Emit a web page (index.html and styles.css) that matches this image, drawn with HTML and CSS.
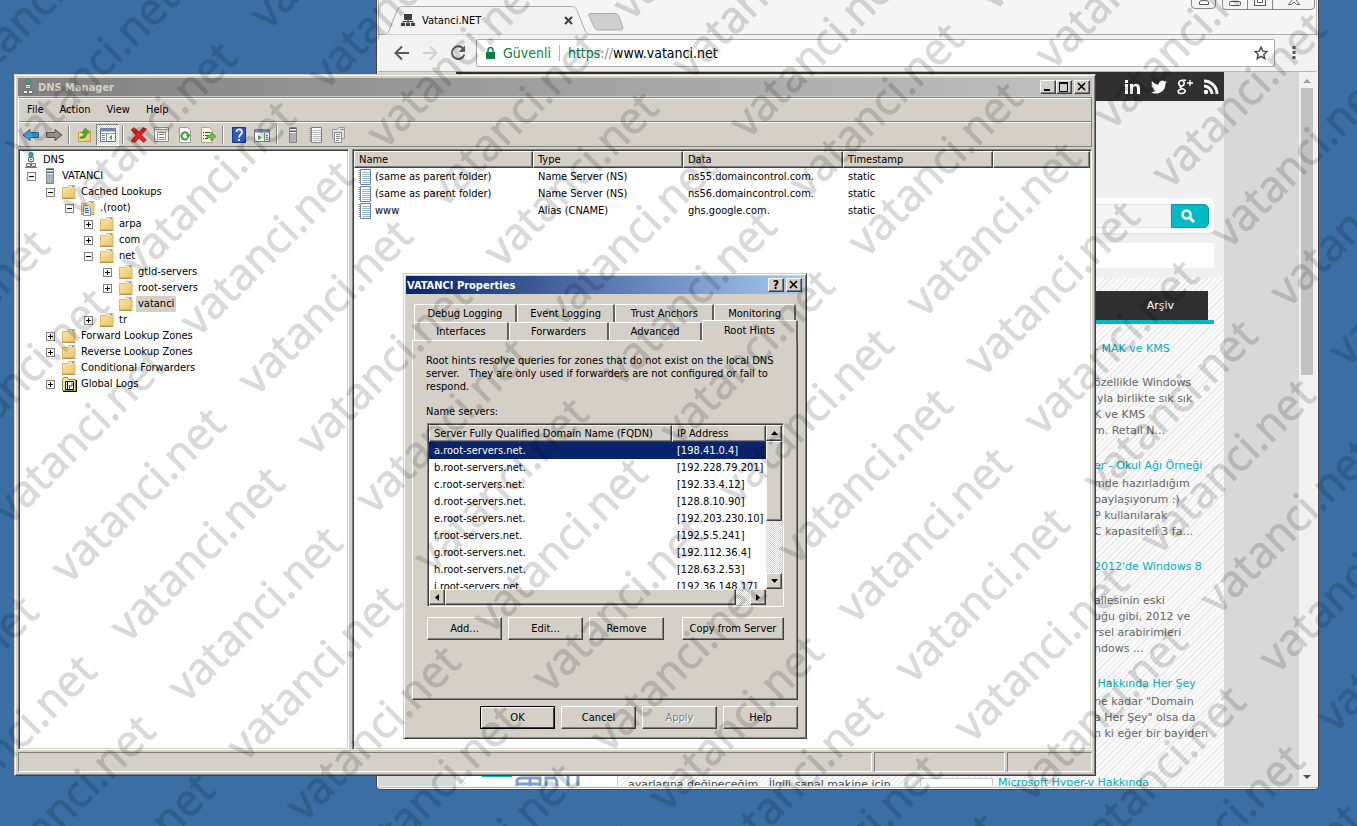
FILE: index.html
```html
<!DOCTYPE html>
<html lang="tr">
<head>
    <meta charset="UTF-8">
    <meta name="viewport" content="width=device-width, initial-scale=1.0">
    <title>DNS Manager</title>
    <link rel="stylesheet" href="styles.css">
</head>
<body>
    <svg class="sprite" aria-hidden="true">
        <linearGradient id="folder-fill" x1="0" y1="0" x2="1" y2="1">
            <stop offset="0" stop-color="#fbe9ac"/><stop offset="1" stop-color="#e9c363"/>
        </linearGradient>
        <symbol id="folder" viewBox="0 0 16 16">
            <path d="M1.500 3.500h5l1.500-2h6v12h-12.500z" fill="url(#folder-fill)" stroke="#dcb65c"/>
            <path d="M8.500 2.500h5" stroke="#fff7da"/><path d="M11 2.500h2" stroke="#5a93c4"/>
            <path d="M1 14.500h13.500" fill="none" stroke="#b9964c"/>
        </symbol>
        <symbol id="root" viewBox="0 0 16 16">
            <use href="#folder"/>
            <path d="M3.500 5.500h5l2 2v8h-7z" fill="#fff" stroke="#8497b5"/>
            <path d="M5 8.500h3M5 10.500h4M5 12.500h4" stroke="#3f78b8"/>
        </symbol>
        <symbol id="dns" viewBox="0 0 16 16">
            <circle cx="8" cy="2.600" r="2.600" fill="#2b7fc4"/><path d="M6 2l2-1.500 1.500 1.500-1 2-2 .5z" fill="#39b54a"/>
            <path d="M5.500 5.500h5v4h-5zM3.500 11.500h4v3h-4zM8.500 11.500h4v3h-4z" fill="#e6e9ee" stroke="#6a727c"/>
            <path d="M7 7.500h2M8 10v1M2 15.500h12" stroke="#777"/>
        </symbol>
        <symbol id="server" viewBox="0 0 16 16">
            <path d="M4.500.5h7v15h-7z" fill="#aab4bb" stroke="#7b868f"/>
            <path d="M5 2.500h6M5 5.500h6" stroke="#edf3f7"/><path d="M5 1.500h6M5 4.500h6" stroke="#56616a"/>
            <path d="M9 13h2v2H9z" fill="#7bd321"/>
        </symbol>
        <symbol id="record" viewBox="0 0 16 16">
            <path d="M3.500.5h10v15h-10z" fill="#fff" stroke="#6681a3"/>
            <path d="M5 3.500h8M5 5.500h8M5 7.500h8M5 9.500h8M5 11.500h8M5 13.500h8" stroke="#9bbcd8"/>
            <path d="M1.500 1.500H4M1.500 3.500H4M1.500 5.500H4M1.500 7.500H4M1.500 9.500H4M1.500 11.500H4M1.500 13.500H4" stroke="#888"/>
        </symbol>
        <symbol id="logs" viewBox="0 0 16 16">
            <path d="M1.500 14.500v-11l1-2h4l1 2h7v11z" fill="#f4ee6a" stroke="#8d8940"/>
            <path d="M2 15.500h13.500V4" fill="none" stroke="#000"/>
            <path d="M4.500 5.500h8v8h-8z" fill="#fff" stroke="#000"/>
            <path d="M6.500 6v7" stroke="#000"/>
            <path d="M8.500 9v4" stroke="#e02020"/><path d="M11 7v3H9" fill="none" stroke="#2233cc"/>
        </symbol>
        <symbol id="arrow" viewBox="0 0 16 16">
            <path d="M0 8l7-5.500v3h8.500v5H7v3z" stroke-linejoin="round"/>
        </symbol>
    </svg>

    <div class="desktop">

        <!-- browser -->
        <section class="browser">
            <div class="tab-strip">
                <svg class="tab-shape" width="215" height="35" viewBox="0 0 215 35">
                    <path d="M0 34.500c7 0 8 0 10-4l8-20c2-4 3-4 7-4h166c4 0 5 0 7 4l8 20c2 4 3 4 9 4" fill="#f2f2f2" stroke="#a9a9a9"/>
                </svg>
                <div class="tab">
                    <svg width="16" height="14" viewBox="0 0 16 14"><path d="M4 1h8v6H4zM1 10h4v3H1zM6 10h4v3H6zM11 10h4v3h-4z" fill="#3d3d3d"/><path d="M8 7v3M3 10V8.500h10V10" fill="none" stroke="#3d3d3d"/></svg>
                    <span class="tab-title">Vatanci.NET</span>
                    <button class="tab-close" aria-label="Close tab"><svg width="9" height="9" viewBox="0 0 9 9"><path d="M1 1l7 7M8 1L1 8" stroke="#3c3c3c" stroke-width="2"/></svg></button>
                </div>
                <svg class="new-tab" width="36" height="18" viewBox="0 0 36 18"><path d="M3 .5h24c2 0 3 1 4 3l4 11c0 2-1 2.500-2 2.500H10c-2 0-3-1-4-3L1 3C0 1 1 .5 3 .5z" fill="#cfcfcf" stroke="#adadad"/></svg>
                <div class="browser-caption">
                    <button class="cap user" aria-label="Profile"><svg width="12" height="8" viewBox="0 0 12 8"><path d="M3 0c0 3 6 3 6 0M1.500 7.500V5c0-2 9-2 9 0v2.500z" fill="#fff" stroke="#555"/></svg></button>
                    <div class="cap-group">
                        <button class="cap" aria-label="Minimize"><svg width="12" height="5" viewBox="0 0 12 5"><rect x=".5" y=".5" width="11" height="4" rx="1" fill="#fff" stroke="#555"/></svg></button>
                        <button class="cap" aria-label="Maximize"><svg width="12" height="8" viewBox="0 0 12 8"><path d="M.5-2v9.500h11V-2M3.500-2v6.500h5V-2" fill="#fff" stroke="#555"/></svg></button>
                        <button class="cap wide" aria-label="Close"><svg width="12" height="8" viewBox="0 0 12 8"><path d="M3-1l1 3-3.500 4.500h3L6 4l2.500 2.500h3L8 2l1-3" fill="#fff" stroke="#666"/></svg></button>
                    </div>
                </div>
            </div>
            <div class="address-row">
                <button class="nav" aria-label="Back"><svg width="16" height="16" viewBox="0 0 16 16"><path d="M15 8H2M8 1.500L1.500 8 8 14.500" fill="none" stroke="#5a5a5a" stroke-width="2"/></svg></button>
                <button class="nav" aria-label="Forward"><svg width="16" height="16" viewBox="0 0 16 16"><path d="M1 8h13M8 1.500L14.500 8 8 14.500" fill="none" stroke="#d0d0d0" stroke-width="2"/></svg></button>
                <button class="nav" aria-label="Reload"><svg width="16" height="16" viewBox="0 0 16 16"><path d="M13 3.500A6.300 6.300 0 1 0 14.300 9.500" fill="none" stroke="#5a5a5a" stroke-width="2"/><path d="M15 .5V7H8.500z" fill="#5a5a5a"/></svg></button>
                <div class="omnibox">
                    <svg width="9" height="12" viewBox="0 0 9 12"><path d="M0 5h9v7H0z" fill="#0b8043"/><path d="M2 5V3a2.500 2.500 0 0 1 5 0v2" fill="none" stroke="#0b8043" stroke-width="1.500"/></svg>
                    <span class="secure">Güvenli</span>
                    <a class="url" href="#"><span class="scheme">https</span><span class="slashes">://</span>www.vatanci.net</a>
                    <svg class="star" width="14" height="14" viewBox="0 0 14 14"><path d="M7 1l1.800 4.100 4.200.4-3.200 2.900 1 4.300L7 10.400l-3.800 2.300 1-4.300L1 5.500l4.200-.4z" fill="none" stroke="#444" stroke-width="1.400"/></svg>
                </div>
                <button class="kebab" aria-label="Menu"><svg width="4" height="14" viewBox="0 0 4 14"><path d="M.5 0h3v3h-3zM.5 5h3v3h-3zM.5 10h3v3h-3z" fill="#5a5a5a"/></svg></button>
            </div>
            <div class="viewport">
                <div class="site">
                    <header class="social">
                        <a href="#" aria-label="LinkedIn"><svg width="16" height="16" viewBox="0 0 16 16"><path d="M0 5h3v10H0zM0 1h3v3H0zM5 5h3v1.500C9.500 4 15 4 15 8.500V15h-3V9c0-2.500-4-2.500-4 0v6H5z" fill="#fff"/></svg></a>
                        <a href="#" aria-label="Twitter"><svg width="16" height="16" viewBox="0 0 24 24"><path d="M24 4.600a10 10 0 0 1-2.800.8 5 5 0 0 0 2.100-2.700 10 10 0 0 1-3.100 1.200 4.900 4.900 0 0 0-8.400 4.500A14 14 0 0 1 1.700 3.200a4.900 4.900 0 0 0 1.500 6.500 4.900 4.900 0 0 1-2.200-.6 4.900 4.900 0 0 0 4 4.900 5 5 0 0 1-2.300.1 4.900 4.900 0 0 0 4.600 3.400A9.900 9.900 0 0 1 0 19.500 14 14 0 0 0 21.500 7z" fill="#fff"/></svg></a>
                        <a href="#" aria-label="Google Plus"><svg width="16" height="16" viewBox="0 0 16 16"><ellipse cx="4.500" cy="4.300" rx="2.700" ry="2.800" fill="none" stroke="#fff" stroke-width="1.700"/><path d="M4.500 1.300H9M4 7.500c-2 1.200 0 1.800 1.500 2.200 4.500 1.300 3 4.800-1 4.800-4.500 0-4.500-3.500 0-4.200" fill="none" stroke="#fff" stroke-width="1.600"/><path d="M10 4h6M13 1v6" stroke="#fff" stroke-width="1.300"/></svg></a>
                        <a href="#" aria-label="RSS"><svg width="16" height="16" viewBox="0 0 16 16"><path d="M1 7a8 8 0 0 1 8 8M1 2a13 13 0 0 1 13 13" fill="none" stroke="#fff" stroke-width="3"/><circle cx="3" cy="13" r="2.200" fill="#fff"/></svg></a>
                    </header>
                    <form class="search">
                        <input type="text" aria-label="Ara">
                        <button type="button" aria-label="Ara"><svg width="14" height="14" viewBox="0 0 14 14"><circle cx="5.500" cy="5.500" r="4" fill="none" stroke="#fff" stroke-width="2.500"/><path d="M8.500 8.500L13 13" stroke="#fff" stroke-width="3"/></svg></button>
                    </form>
                    <div class="notice"></div>
                    <div class="columns">
                        <article class="post">
                            <div class="thumb">
                                <svg width="70" height="11" viewBox="0 0 70 11"><path d="M3 11V5c0-3 3-3 5-3h18v9M16 2v9M3 8h23M32 11V2h7c4 0 4 3 4 9M54 11V0M64 11V0" fill="none" stroke="#7e9fd0" stroke-width="3"/></svg>
                            </div>
                            <p>ayarlarına değineceğim.. İlgili sanal makine için</p>
                            <div class="more"></div>
                        </article>
                        <aside class="sidebar">
                            <h3>Arşiv</h3>
                            <h4 class="long"><a href="#">- MAK ve KMS</a></h4>
                            <p>özellikle Windows<br>ıyla birlikte sık sık<br>K ve KMS<br>m. Retail N...</p>
                            <h4><a href="#">er - Okul Ağı Örneği</a></h4>
                            <p>mde hazırladığım<br>paylaşıyorum :)<br>P kullanılarak<br>C kapasiteli 3 fa...</p>
                            <h4 class="long"><a href="#">2012'de Windows 8</a></h4>
                            <p>ailesinin eski<br>uğu gibi, 2012 ve<br>rsel arabirimleri<br>ndows ...</p>
                            <h4><a href="#">&nbsp;Hakkında Her Şey</a></h4>
                            <p class="last">ne kadar "Domain<br>a Her Şey" olsa da<br>n ki eğer bir bayiden</p>
                            <h4 class="next"><a href="#">Microsoft Hyper-v Hakkında</a></h4>
                        </aside>
                    </div>
                </div>
                <div class="page-scroll">
                    <svg width="10" height="5" viewBox="0 0 10 5"><path d="M1 5l4-4 4 4z" fill="#a0a0a0"/></svg>
                    <div class="page-thumb"></div>
                    <svg width="10" height="5" viewBox="0 0 10 5"><path d="M1 0l4 4 4-4z" fill="#505050"/></svg>
                </div>
            </div>
        </section>

        <!-- dns manager -->
        <section class="window dns">
            <div class="title-bar inactive">
                <svg class="icon"><use href="#dns"/></svg>
                <span class="title">DNS Manager</span>
                <button class="caption" aria-label="Minimize"><svg width="12" height="10" viewBox="0 0 12 10"><path d="M2 8h6" stroke="#000" stroke-width="2"/></svg></button>
                <button class="caption" aria-label="Maximize"><svg width="12" height="10" viewBox="0 0 12 10"><path d="M1.500 1v8.500h8V1" fill="none" stroke="#000"/><path d="M1 1h9" stroke="#000" stroke-width="2"/></svg></button>
                <button class="caption apart" aria-label="Close"><svg width="12" height="10" viewBox="0 0 12 10"><path d="M2 1l7 7M9 1L2 8" stroke="#000" stroke-width="1.600"/></svg></button>
            </div>
            <div class="rebar">
                <nav class="menu">
                    <button>File</button><button>Action</button><button>View</button><button>Help</button>
                </nav>
                <div class="toolbar">
                    <button aria-label="Back"><svg class="icon"><use href="#arrow" fill="#3aa0dd" stroke="#1c5f9c"/></svg></button>
                    <button aria-label="Forward"><svg class="icon flip"><use href="#arrow" fill="#8c8c8c" stroke="#555"/></svg></button>
                    <i class="sep"></i>
                    <button aria-label="Up"><svg class="icon" viewBox="0 0 16 16"><path d="M1.500 5.500h6l1-2h5v11h-12z" fill="url(#folder-fill)" stroke="#c79c3d"/><path d="M3 10c3 0 4-1 4-4H4.500L8.500 1l4 5H10c0 4-3 6-7 5z" fill="#46b02e" stroke="#28761c" stroke-width=".6"/></svg></button>
                    <button class="pressed" aria-label="Show tree"><svg class="icon" viewBox="0 0 16 16"><path d="M.5 1.500h15v13H.5z" fill="#fff" stroke="#6a7891"/><path d="M1 3h14" stroke="#7588ac" stroke-width="3"/><path d="M1 6.500h14M6.500 7v7" stroke="#8795ae"/><path d="M2 8.500h3M2 10.500h3M2 12.500h3" stroke="#6a7891"/><path d="M12 8v5l-3-2.500z" fill="#36a52c"/></svg></button>
                    <i class="sep"></i>
                    <button aria-label="Delete"><svg class="icon" viewBox="0 0 16 16"><path d="M0 3l3-2.500L8 5l4.500-4.500L15.500 2 10.500 8l5 5-3 2.500L8 11l-4 4.500L0 14l5-6z" fill="#dc2222" stroke="#9e1111" stroke-width=".6"/></svg></button>
                    <button aria-label="Properties"><svg class="icon" viewBox="0 0 16 16"><path d="M.5.5h14v14H.5z" fill="#f3f1ec" stroke="#8d8a82"/><path d="M1 2.500h13" stroke="#aaa"/><path d="M3.500 5.500h8v7h-8z" fill="#fff" stroke="#999"/><path d="M5 7.500h5M5 10.500h5" stroke="#777"/></svg></button>
                    <button aria-label="Refresh"><svg class="icon" viewBox="0 0 16 16"><path d="M2.500.5h8l3 3v12h-11z" fill="#fff" stroke="#9a9a9a"/><path d="M10.500 11.500A3.600 3.600 0 1 1 11.500 8" fill="none" stroke="#35a12c" stroke-width="2"/><path d="M13.500 7.500L11 12 9 8z" fill="#35a12c"/></svg></button>
                    <button aria-label="Export list"><svg class="icon" viewBox="0 0 16 16"><path d="M1.500.5h8l3 3v12h-11z" fill="#fcf5dd" stroke="#b0a484"/><path d="M3 5.500h1M5 5.500h5M3 8.500h1M5 8.500h3M3 11.500h1M5 11.500h3" stroke="#444"/><path d="M7 8h4V5l5 4.500-5 4.500v-3H7z" fill="#65c43e" stroke="#2c8a23" stroke-width=".6"/></svg></button>
                    <i class="sep"></i>
                    <button aria-label="Help"><svg class="icon" viewBox="0 0 16 16"><path d="M1.500.5h13v15h-13z" fill="#2f57c3" stroke="#1b3484"/><path d="M5.500 5c0-4 5.500-3 5.500 0S8 7.500 8 10.500" fill="none" stroke="#fff" stroke-width="1.800"/><path d="M7 12h2v2H7z" fill="#fff"/></svg></button>
                    <button aria-label="Show pane"><svg class="icon" viewBox="0 0 16 16"><path d="M.5 2.500h15v12H.5z" fill="#fff" stroke="#6a7891"/><path d="M1 4h14" stroke="#7588ac" stroke-width="3"/><path d="M10.500 6v8" stroke="#8795ae"/><path d="M12 8.500h2M12 10.500h2M12 12.500h2" stroke="#6a7891"/><path d="M4 8v5l4-2.500z" fill="#36a52c"/></svg></button>
                    <i class="sep"></i>
                    <button aria-label="New server"><svg class="icon gray"><use href="#server"/></svg></button>
                    <button aria-label="New record"><svg class="icon gray"><use href="#record"/></svg></button>
                    <button aria-label="New zone"><svg class="icon gray" viewBox="0 0 16 16"><path d="M1.500 2.500h5l1-2h6v11h-12z" fill="#e0e0e0" stroke="#999"/><path d="M3.500 5.500h7v10h-7z" fill="#f8f8f8" stroke="#888"/><path d="M5 7.500h4M5 9.500h4M5 11.500h4M5 13.500h3M9 2.500h4" stroke="#888"/></svg></button>
                </div>
            </div>
            <div class="panes">
                <div class="tree">
                    <div class="node top"><svg class="icon"><use href="#dns"/></svg><span>DNS</span></div>
                    <ul>
                        <li>
                            <div class="node"><button class="expander open" aria-label="Collapse"></button><svg class="icon"><use href="#server"/></svg><span>VATANCI</span></div>
                            <ul>
                                <li>
                                    <div class="node"><button class="expander open" aria-label="Collapse"></button><svg class="icon"><use href="#folder"/></svg><span>Cached Lookups</span></div>
                                    <ul>
                                        <li>
                                            <div class="node"><button class="expander open" aria-label="Collapse"></button><svg class="icon"><use href="#root"/></svg><span>.(root)</span></div>
                                            <ul>
                                                <li><div class="node"><button class="expander" aria-label="Expand"></button><svg class="icon"><use href="#folder"/></svg><span>arpa</span></div></li>
                                                <li><div class="node"><button class="expander" aria-label="Expand"></button><svg class="icon"><use href="#folder"/></svg><span>com</span></div></li>
                                                <li>
                                                    <div class="node"><button class="expander open" aria-label="Collapse"></button><svg class="icon"><use href="#folder"/></svg><span>net</span></div>
                                                    <ul>
                                                        <li><div class="node"><button class="expander" aria-label="Expand"></button><svg class="icon"><use href="#folder"/></svg><span>gtld-servers</span></div></li>
                                                        <li><div class="node"><button class="expander" aria-label="Expand"></button><svg class="icon"><use href="#folder"/></svg><span>root-servers</span></div></li>
                                                        <li><div class="node leaf"><svg class="icon"><use href="#folder"/></svg><span class="selected">vatanci</span></div></li>
                                                    </ul>
                                                </li>
                                                <li><div class="node"><button class="expander" aria-label="Expand"></button><svg class="icon"><use href="#folder"/></svg><span>tr</span></div></li>
                                            </ul>
                                        </li>
                                    </ul>
                                </li>
                                <li><div class="node"><button class="expander" aria-label="Expand"></button><svg class="icon"><use href="#folder"/></svg><span>Forward Lookup Zones</span></div></li>
                                <li><div class="node"><button class="expander" aria-label="Expand"></button><svg class="icon"><use href="#folder"/></svg><span>Reverse Lookup Zones</span></div></li>
                                <li><div class="node leaf"><svg class="icon"><use href="#folder"/></svg><span>Conditional Forwarders</span></div></li>
                                <li><div class="node"><button class="expander" aria-label="Expand"></button><svg class="icon"><use href="#logs"/></svg><span>Global Logs</span></div></li>
                            </ul>
                        </li>
                    </ul>
                </div>
                <div class="records">
                    <table>
                        <colgroup><col class="c-name"><col class="c-mid"><col class="c-data"><col class="c-mid"><col></colgroup>
                        <thead>
                            <tr><th>Name</th><th>Type</th><th>Data</th><th>Timestamp</th><th></th></tr>
                        </thead>
                        <tbody>
                            <tr><td><svg class="icon"><use href="#record"/></svg>(same as parent folder)</td><td>Name Server (NS)</td><td>ns55.domaincontrol.com.</td><td>static</td><td></td></tr>
                            <tr><td><svg class="icon"><use href="#record"/></svg>(same as parent folder)</td><td>Name Server (NS)</td><td>ns56.domaincontrol.com.</td><td>static</td><td></td></tr>
                            <tr><td><svg class="icon"><use href="#record"/></svg>www</td><td>Alias (CNAME)</td><td>ghs.google.com.</td><td>static</td><td></td></tr>
                        </tbody>
                    </table>
                </div>
            </div>
            <div class="status"><span></span><span></span><span></span></div>
        </section>

        <!-- properties dialog -->
        <section class="window dialog">
            <div class="title-bar">
                <span class="title">VATANCI Properties</span>
                <button class="caption help" aria-label="Help">?</button>
                <button class="caption apart" aria-label="Close"><svg width="12" height="10" viewBox="0 0 12 10"><path d="M2 1l7 7M9 1L2 8" stroke="#000" stroke-width="1.600"/></svg></button>
            </div>
            <div class="tabs back">
                <button>Debug Logging</button><button>Event Logging</button><button>Trust Anchors</button><button>Monitoring</button>
            </div>
            <div class="tabs front">
                <button>Interfaces</button><button>Forwarders</button><button>Advanced</button><button class="active">Root Hints</button>
            </div>
            <div class="sheet">
                <p>Root hints resolve queries for zones that do not exist on the local DNS<br>server. &nbsp; They are only used if forwarders are not configured or fail to<br>respond.</p>
                <p class="list-label">Name servers:</p>
                <div class="list-box">
                    <div class="list-top">
                        <div class="list-view">
                            <table>
                                <colgroup><col class="c-fqdn"><col></colgroup>
                                <thead>
                                    <tr><th>Server Fully Qualified Domain Name (FQDN)</th><th>IP Address</th></tr>
                                </thead>
                                <tbody>
                                    <tr class="current"><td>a.root-servers.net.</td><td>[198.41.0.4]</td></tr>
                                    <tr><td>b.root-servers.net.</td><td>[192.228.79.201]</td></tr>
                                    <tr><td>c.root-servers.net.</td><td>[192.33.4.12]</td></tr>
                                    <tr><td>d.root-servers.net.</td><td>[128.8.10.90]</td></tr>
                                    <tr><td>e.root-servers.net.</td><td>[192.203.230.10]</td></tr>
                                    <tr><td>f.root-servers.net.</td><td>[192.5.5.241]</td></tr>
                                    <tr><td>g.root-servers.net.</td><td>[192.112.36.4]</td></tr>
                                    <tr><td>h.root-servers.net.</td><td>[128.63.2.53]</td></tr>
                                    <tr><td>i.root-servers.net.</td><td>[192.36.148.17]</td></tr>
                                </tbody>
                            </table>
                        </div>
                        <div class="scroll vertical">
                            <button aria-label="Scroll up"><svg width="7" height="4" viewBox="0 0 7 4"><path d="M0 4l3.500-4L7 4z"/></svg></button>
                            <div class="thumb-v"></div>
                            <button class="end" aria-label="Scroll down"><svg width="7" height="4" viewBox="0 0 7 4"><path d="M0 0l3.500 4L7 0z"/></svg></button>
                        </div>
                    </div>
                    <div class="scroll horizontal">
                        <button aria-label="Scroll left"><svg width="4" height="7" viewBox="0 0 4 7"><path d="M4 0L0 3.500 4 7z"/></svg></button>
                        <div class="thumb-h"></div>
                        <button class="end" aria-label="Scroll right"><svg width="4" height="7" viewBox="0 0 4 7"><path d="M0 0l4 3.500L0 7z"/></svg></button>
                    </div>
                </div>
                <div class="actions">
                    <button class="btn">Add...</button>
                    <button class="btn">Edit...</button>
                    <button class="btn">Remove</button>
                    <button class="btn copy">Copy from Server</button>
                </div>
            </div>
            <div class="footer">
                <button class="btn default">OK</button>
                <button class="btn">Cancel</button>
                <button class="btn" disabled>Apply</button>
                <button class="btn">Help</button>
            </div>
        </section>

        <svg class="watermark" id="watermark"></svg>
    </div>

    <script src="watermark.js"></script>
</body>
</html>
```
FILE: styles.css
```css
* {
    box-sizing: border-box;
}

body {
    margin: 0;
    font-family: "DejaVu Sans Condensed", Tahoma, sans-serif;
    font-size: 11px;
    color: #000;
}

button {
    margin: 0;
    padding: 0;
    border: none;
    background: none;
    font: inherit;
    color: inherit;
}

p, ul, h3, h4 {
    margin: 0;
    padding: 0;
    font-size: 11px;
    font-weight: normal;
}

a {
    text-decoration: none;
}

svg {
    display: block;
    flex: none;
}

table {
    width: 100%;
    border-collapse: separate;
    border-spacing: 0;
    table-layout: fixed;
}

th, td {
    font-weight: normal;
    text-align: left;
    white-space: nowrap;
}

.sprite {
    position: absolute;
    width: 0;
    height: 0;
}

.icon {
    width: 16px;
    height: 16px;
}

.desktop {
    position: relative;
    height: 100vh;
    overflow: hidden;
    background: #3a6ea5;
}

/* browser window */
.browser {
    position: absolute;
    left: 376px;
    top: -4px;
    width: 943px;
    height: 794px;
    display: flex;
    flex-direction: column;
    padding: 0 1px 3px 1px;
    border: 1px solid #444;
    border-radius: 4px;
    background: #f5f5f5;
    box-shadow: inset 0 0 0 1px #fff, inset 0 0 0 2px #b5b5b5;
}

.tab-strip {
    position: relative;
    height: 38px;
    display: flex;
    align-items: flex-start;
    padding-left: 8px;
    border-bottom: 1px solid #a9a9a9;
}

.tab-shape {
    position: absolute;
    left: 1px;
    bottom: -1px;
}

.tab {
    position: relative;
    display: flex;
    align-items: center;
    width: 191px;
    height: 28px;
    margin-top: 9px;
    padding-left: 14px;
}

.tab-title {
    flex: 1;
    padding-left: 6px;
}

.tab-close {
    padding: 4px;
}

.new-tab {
    margin: 16px 0 0 11px;
}

.browser-caption {
    display: flex;
    gap: 6px;
    margin-left: auto;
    padding-right: 2px;
}

.cap-group {
    display: flex;
    border: 1px solid #888;
    border-radius: 0 0 4px 4px;
}

.cap {
    display: flex;
    justify-content: center;
    align-items: flex-end;
    width: 25px;
    height: 11px;
    padding-bottom: 3px;
    border-right: 1px solid #888;
}

.cap.user {
    height: 12px;
    border: 1px solid #888;
    border-radius: 0 0 4px 4px;
}

.cap.wide {
    width: 41px;
    border-right: none;
}

.address-row {
    display: flex;
    align-items: center;
    height: 37px;
    padding: 0 21px 0 16px;
    background: #f2f2f2;
    border-bottom: 1px solid #b6b4b6;
}

.nav {
    margin-right: 12px;
}

.nav + .omnibox {
    margin-left: -2px;
}

.omnibox {
    flex: 1;
    display: flex;
    align-items: center;
    height: 28px;
    padding: 0 6px 0 9px;
    border: 1px solid #a9a9a9;
    border-radius: 2px;
    background: #fff;
    font-size: 14px;
}

.secure {
    margin-left: 8px;
    padding-right: 8px;
    border-right: 1px solid #b5b5b5;
    color: #0b8043;
}

.url {
    flex: 1;
    padding-left: 8px;
    color: #000;
}

.scheme {
    color: #0b8043;
}

.slashes {
    color: #888;
}

.kebab {
    padding-left: 17px;
}

.viewport {
    flex: 1;
    display: flex;
    min-height: 0;
    overflow: hidden;
    background: #d8d8d8;
}

.site {
    flex: 1;
    display: flex;
    flex-direction: column;
    margin: 0 75px 0 78px;
    background: #f0f0f0;
    font-family: "DejaVu Sans", Verdana, sans-serif;
    overflow: hidden;
}

.social {
    display: flex;
    justify-content: flex-end;
    align-items: center;
    gap: 10px;
    height: 29px;
    flex: none;
    padding-right: 5px;
    background: #303030;
}

.search {
    display: flex;
    flex: none;
    height: 35px;
    margin: 97px 10px 0 400px;
    padding: 6px 5px 5px;
    border-radius: 6px;
    background: #fcfcfc;
    box-shadow: 0 1px 2px #ddd;
}

.search input {
    flex: 1;
    min-width: 0;
    border: 1px solid #e4e4e4;
    background: #f5f5f5;
}

.search button {
    display: flex;
    align-items: center;
    justify-content: center;
    width: 38px;
    padding-right: 4px;
    border: 1px solid #0a9da5;
    border-radius: 0 5px 5px 0;
    background: #00bac4;
}

.notice {
    flex: none;
    height: 25px;
    margin: 10px 10px 10px 400px;
    border-radius: 2px;
    background: #fff;
}

.columns {
    flex: 1;
    display: flex;
    justify-content: space-between;
    align-items: flex-end;
    min-height: 0;
    background: repeating-linear-gradient(135deg, #fafafa 0 3px, #e8e8e8 3px 4px);
}

.post {
    display: flex;
    align-items: flex-end;
    height: 14px;
    margin-left: 10px;
    overflow: hidden;
}

.thumb {
    width: 152px;
    height: 14px;
    padding-left: 48px;
    border-right: 1px solid #ccc;
    background: linear-gradient(#00bac4, #00bac4) 16px 0 / 30px 5px no-repeat #fff;
}

.thumb svg {
    margin-top: 4px;
}

.post p {
    width: 302px;
    height: 9px;
    padding-left: 10px;
    line-height: 16px;
    color: #444;
    white-space: nowrap;
}

.more {
    width: 73px;
    height: 8px;
    border: 1px solid #ccc;
    border-bottom: none;
    background: #fff;
}

.sidebar {
    align-self: stretch;
    width: 134px;
    padding: 13px 10px 0 4px;
    line-height: 16px;
    color: #666;
    white-space: nowrap;
}

.sidebar h3 {
    height: 29px;
    margin: 0 6px 0 -140px;
    padding-right: 34px;
    background: #303030;
    line-height: 30px;
    text-align: right;
    color: #fff;
}

.sidebar h3 + h4 {
    margin-left: -140px;
    padding: 17px 0 0 140px;
    border-top: 4px solid #00bac4;
}

.sidebar h4 {
    margin-bottom: 2px;
    line-height: 16px;
}

.sidebar h4.long {
    padding-bottom: 16px;
}

.sidebar h4.next {
    margin-left: -96px;
}

.sidebar a {
    color: #00b0bb;
}

.sidebar p {
    margin-bottom: 19px;
}

.sidebar p.last {
    margin-bottom: 33px;
}

.page-scroll {
    display: flex;
    flex-direction: column;
    align-items: center;
    justify-content: space-between;
    width: 18px;
    padding: 6px 2px 6px 0;
    background: #f1f1f1;
}

.page-thumb {
    width: 12px;
    height: 287px;
    margin: 5px 0 auto;
    background: #c1c1c1;
}

/* classic windows */
.window {
    position: absolute;
    display: flex;
    flex-direction: column;
    border: 1px solid;
    border-color: #d4d0c8 #404040 #404040 #d4d0c8;
    background: #d4d0c8;
    box-shadow: inset 1px 1px #fff, inset -1px -1px #808080;
}

.title-bar {
    display: flex;
    align-items: center;
    height: 18px;
    flex: none;
    padding: 0 2px;
    background: linear-gradient(to right, #0a246a, #a6caf0);
    color: #fff;
    font-weight: bold;
}

.title-bar.inactive {
    background: linear-gradient(to right, #808080, #c0c0c0);
    color: #d4d0c8;
}

.title-bar.inactive .title {
    padding-left: 2px;
}

.title {
    flex: 1;
}

.caption {
    display: flex;
    align-items: center;
    justify-content: center;
    width: 16px;
    height: 14px;
    border: 1px solid;
    border-color: #fff #404040 #404040 #fff;
    background: #d4d0c8;
    box-shadow: inset -1px -1px #808080;
    color: #000;
}

.caption.apart {
    margin-left: 2px;
}

.caption.help {
    font-size: 12px;
    font-weight: bold;
}

.dns {
    left: 14px;
    top: 74px;
    width: 1082px;
    height: 702px;
    padding: 3px;
}

.rebar {
    margin-top: 1px;
    border: 1px solid #808080;
    border-left-color: #fff;
    box-shadow: inset 0 1px #fff;
}

.menu {
    display: flex;
    align-items: center;
    height: 24px;
    border-bottom: 1px solid #808080;
}

.menu button {
    height: 18px;
    padding: 0 8px;
}

.toolbar {
    display: flex;
    align-items: center;
    height: 24px;
    border-top: 1px solid #fff;
}

.toolbar button {
    display: flex;
    align-items: center;
    justify-content: center;
    width: 23px;
    height: 22px;
}

.toolbar .pressed {
    border: 1px solid;
    border-color: #808080 #fff #fff #808080;
    background: repeating-conic-gradient(#fff 0 25%, #d4d0c8 0 50%) 0 0 / 2px 2px;
}

.sep {
    width: 2px;
    height: 18px;
    margin: 0 3px;
    border-left: 1px solid #808080;
    border-right: 1px solid #fff;
}

.flip {
    transform: scaleX(-1);
}

.gray {
    filter: grayscale(1);
}

.panes {
    flex: 1;
    display: flex;
    gap: 3px;
    min-height: 0;
    margin-top: 2px;
}

.tree, .records {
    border: 1px solid;
    border-color: #808080 #fff #fff #808080;
    background: #fff;
    box-shadow: inset 1px 1px #404040, inset -1px -1px #d4d0c8;
}

.tree {
    width: 331px;
    padding: 2px 1px;
}

.tree ul {
    list-style: none;
}

.tree ul ul {
    padding-left: 19px;
}

.node {
    display: flex;
    align-items: center;
    height: 16px;
    padding-left: 7px;
}

.node.top {
    padding-left: 3px;
}

.node.leaf {
    padding-left: 22px;
}

.node span {
    height: 16px;
    margin-left: 2px;
    padding: 0 2px;
    line-height: 15px;
    white-space: nowrap;
}

.node .selected {
    background: #d4d0c8;
}

.expander {
    width: 9px;
    height: 9px;
    margin-right: 6px;
    border: 1px solid #808080;
    background:
        linear-gradient(#000, #000) center / 5px 1px no-repeat,
        linear-gradient(#000, #000) center / 1px 5px no-repeat,
        #fff;
}

.expander.open {
    background: linear-gradient(#000, #000) center / 5px 1px no-repeat, #fff;
}

.records {
    flex: 1;
    min-width: 0;
    padding: 1px;
}

.c-name {
    width: 179px;
}

.c-mid {
    width: 150px;
}

.c-data {
    width: 160px;
}

.window th {
    height: 17px;
    padding: 0 4px;
    border: 1px solid;
    border-color: #fff #404040 #404040 #fff;
    background: #d4d0c8;
    box-shadow: inset -1px -1px #808080;
    line-height: 14px;
}

.window td {
    height: 17px;
    padding: 0 5px;
    line-height: 15px;
}

.window.dns td:first-child {
    display: flex;
    align-items: center;
    gap: 2px;
    padding: 0 3px;
}

.status {
    display: flex;
    gap: 2px;
    height: 20px;
    margin-top: 2px;
}

.status span {
    flex: 0 0 131px;
    border: 1px solid;
    border-color: #808080 #fff #fff #808080;
}

.status span:first-child {
    flex: 1;
}

.status span:last-child {
    flex-basis: 85px;
}

/* dialog */
.dialog {
    left: 403px;
    top: 273px;
    width: 404px;
    height: 466px;
    padding: 2px 2px 9px;
}

.dialog > .title-bar {
    padding-left: 1px;
}

.tabs {
    position: relative;
    display: flex;
    flex: none;
    margin: 0 8px;
}

.tabs.back {
    margin-top: 10px;
}

.tabs button {
    width: 93px;
    height: 18px;
    border-top: 1px solid #fff;
    border-left: 1px solid #fff;
    border-right: 2px solid #606060;
    border-radius: 2px 2px 0 0;
}

.tabs.back button {
    width: 99px;
}

.tabs.back button:first-child {
    width: 103px;
}

.tabs.back button:last-child {
    width: 82px;
}

.tabs.front button:first-child {
    width: 95px;
}

.tabs.front button:nth-child(2) {
    width: 100px;
}

/* the active tab rises over the row behind it */
.tabs .active {
    flex: 1;
    height: 22px;
    margin: -2px -2px -2px 0;
    padding-bottom: 2px;
    background: #d4d0c8;
}

.sheet {
    flex: 1;
    margin: 0 6px;
    padding: 13px 13px 0;
    border: 1px solid;
    border-color: #fff #404040 #404040 #fff;
    box-shadow: inset -1px -1px #808080;
    line-height: 13px;
    white-space: nowrap;
}

.list-label {
    margin: 12px 0 5px;
}

.list-box {
    width: 357px;
    height: 184px;
    margin-left: 1px;
    padding: 1px;
    border: 1px solid;
    border-color: #808080 #fff #fff #808080;
    box-shadow: inset 1px 1px #404040;
}

.list-top {
    display: flex;
    height: 164px;
}

.list-view {
    flex: 1;
    min-width: 0;
    overflow: hidden;
    background: #fff;
}

.c-fqdn {
    width: 243px;
}

.window.dialog td {
    padding: 0 5px;
}

.current td {
    background: #0a246a;
    color: #fff;
}

.scroll {
    display: flex;
    background: repeating-conic-gradient(#fff 0 25%, #d4d0c8 0 50%) 0 0 / 2px 2px;
}

.vertical {
    flex-direction: column;
    width: 16px;
}

.horizontal {
    width: 337px;
    height: 16px;
}

.scroll button, .thumb-v, .thumb-h {
    display: flex;
    align-items: center;
    justify-content: center;
    width: 16px;
    height: 16px;
    border: 1px solid;
    border-color: #fff #404040 #404040 #fff;
    background: #d4d0c8;
    box-shadow: inset -1px -1px #808080;
}

.scroll .thumb-v {
    height: 80px;
}

.scroll .thumb-h {
    width: 291px;
}

.vertical .end {
    margin-top: auto;
}

.horizontal .end {
    margin-left: auto;
}

.actions, .footer {
    display: flex;
    gap: 6px;
}

.actions {
    margin: 10px 0 0 1px;
}

.footer {
    justify-content: flex-end;
    margin: 6px 6px 0;
}

.btn {
    width: 75px;
    height: 23px;
    border: 1px solid;
    border-color: #fff #404040 #404040 #fff;
    background: #d4d0c8;
    box-shadow: inset -1px -1px #808080;
}

.btn.copy {
    width: 102px;
    margin-left: auto;
}

.btn.default {
    border-color: #000;
    box-shadow: inset 1px 1px #fff, inset -1px -1px #404040;
}

.btn:disabled {
    color: #808080;
    text-shadow: 1px 1px #fff;
}

/* watermark over the whole desktop */
.watermark {
    position: absolute;
    left: 0;
    top: 0;
    width: 100%;
    height: 100%;
    pointer-events: none;
    font-family: "Open Sans", sans-serif;
    font-size: 44px;
    fill: #000;
    stroke: #000;
    stroke-width: 1px;
    opacity: 0.15;
}
```
FILE: watermark.js
```js
// diagonal columns of the site name, each one stepping down to the right
const watermark = document.getElementById('watermark');
const origin = { x: 69, y: 585 };
const step = { x: 58.7, y: 59.4 };
const column = { x: 187.3, y: -187.8 };

for (let c = -3; c < 8; c++) {
    for (let i = -20; i < 26; i++) {
        const x = Math.round(origin.x + c * column.x + i * step.x);
        const y = Math.round(origin.y + c * column.y + i * step.y);
        if (x < -180 || x > window.innerWidth || y < 0 || y > window.innerHeight + 180) {
            continue;
        }
        const text = document.createElementNS('http://www.w3.org/2000/svg', 'text');
        text.setAttribute('transform', `translate(${x} ${y}) rotate(-45)`);
        text.textContent = 'vatanci.net';
        watermark.appendChild(text);
    }
}
```
